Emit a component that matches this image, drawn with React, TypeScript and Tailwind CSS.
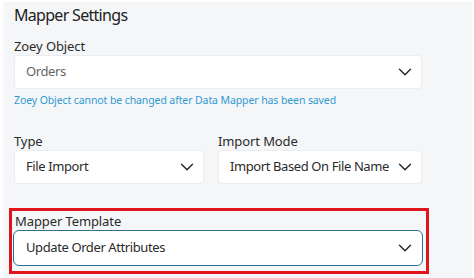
import { ChevronDown } from "lucide-react";

function Select({ value, className = "", textClass = "text-[#2b2b2b]" }: { value: string; className?: string; textClass?: string }) {
  return (
    <div className={`flex items-center justify-between bg-white rounded-[4px] border border-[#eaecef] h-[34px] pl-[11px] pr-[5px] ${className}`}>
      <span className={`text-[13px] tracking-[-0.4px] whitespace-nowrap ${textClass}`}>{value}</span>
      <ChevronDown size={22} strokeWidth={1.5} className="text-[#222] shrink-0" />
    </div>
  );
}

export default function App() {
  return (
    <div className="w-[474px] h-[278px] bg-white overflow-hidden font-['Noto_Sans',sans-serif]">
      <div className="ml-[3px] mt-[2px] w-[469px] h-[276px] bg-[#f5f6f8] pl-[11px]">
        <div className="text-[16px] tracking-[-0.7px] text-[#222] leading-[20px] pt-[3px]">Mapper Settings</div>

        <div className="mt-[12px] text-[13px] tracking-[-0.1px] text-[#2b2b2b] leading-[18px]">Zoey Object</div>
        <Select value="Orders" className="w-[408px]" textClass="text-[#666]" />
        <div className="text-[10.5px] tracking-[-0.1px] text-[#2f9bd2] leading-[14px] mt-[4px]">
          Zoey Object cannot be changed after Data Mapper has been saved
        </div>

        <div className="flex gap-[14px] mt-[25px]">
          <div className="w-[190px]">
            <div className="text-[13px] tracking-[-0.1px] text-[#2b2b2b] leading-[18px]">Type</div>
            <Select value="File Import" />
          </div>
          <div className="w-[204px]">
            <div className="text-[13px] tracking-[-0.1px] text-[#2b2b2b] leading-[18px]">Import Mode</div>
            <Select value="Import Based On File Name" />
          </div>
        </div>

        <div className="mt-[24px] -ml-[5px] w-[420px] h-[66px] border-[3px] border-[#e0141b] pl-[1px] pt-[1px]">
          <div className="text-[13px] tracking-[-0.1px] text-[#2b2b2b] leading-[18px] pl-[2px]">Mapper Template</div>
          <div className="flex items-center justify-between bg-white rounded-[6px] border-[1.5px] border-[#2f6f90] h-[36px] w-[410px] pl-[12px] pr-[6px]">
            <span className="text-[13px] tracking-[-0.4px] text-[#2b2b2b]">Update Order Attributes</span>
            <ChevronDown size={22} strokeWidth={1.5} className="text-[#222]" />
          </div>
        </div>
      </div>
    </div>
  );
}
